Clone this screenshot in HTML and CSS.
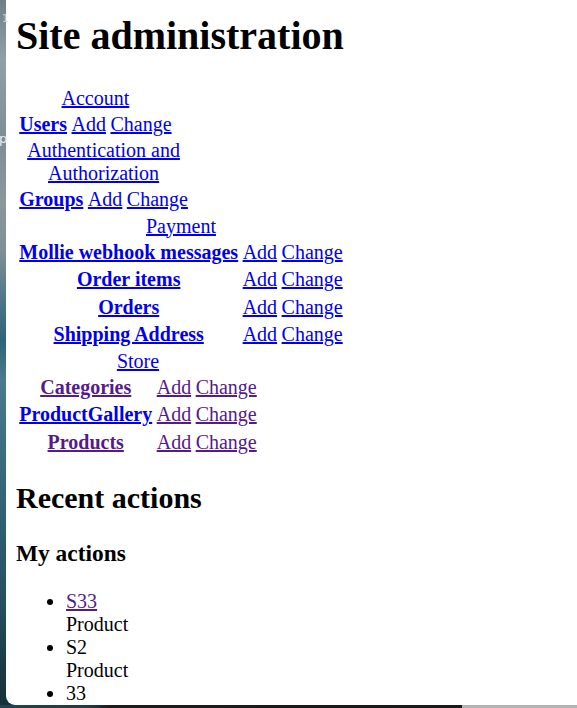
FILE: index.html
```html
<!DOCTYPE html>
<html lang="en">
<head>
<meta charset="utf-8">
<title>Site administration</title>
<link rel="stylesheet" href="styles.css">
</head>
<body class="desktop">
<span class="desk-label desk-label-1">1</span>
<span class="desk-label desk-label-p">p</span>
<div class="window">
  <div class="page">
    <h1 class="title">Site administration</h1>
    <div class="content-main">
      <div class="module">
        <table class="app-table">
          <caption class="app-caption"><a class="link" href="#">Account</a></caption>
          <tr><th class="model-name"><a class="link" href="#">Users</a></th><td class="model-action"><a class="link" href="#">Add</a></td><td class="model-action"><a class="link" href="#">Change</a></td></tr>
        </table>
      </div>
      <div class="module">
        <table class="app-table">
          <caption class="app-caption"><a class="link" href="#">Authentication and Authorization</a></caption>
          <tr><th class="model-name"><a class="link" href="#">Groups</a></th><td class="model-action"><a class="link" href="#">Add</a></td><td class="model-action"><a class="link" href="#">Change</a></td></tr>
        </table>
      </div>
      <div class="module">
        <table class="app-table">
          <caption class="app-caption"><a class="link" href="#">Payment</a></caption>
          <tr><th class="model-name"><a class="link" href="#">Mollie webhook messages</a></th><td class="model-action"><a class="link" href="#">Add</a></td><td class="model-action"><a class="link" href="#">Change</a></td></tr>
          <tr><th class="model-name"><a class="link" href="#">Order items</a></th><td class="model-action"><a class="link" href="#">Add</a></td><td class="model-action"><a class="link" href="#">Change</a></td></tr>
          <tr><th class="model-name"><a class="link" href="#">Orders</a></th><td class="model-action"><a class="link" href="#">Add</a></td><td class="model-action"><a class="link" href="#">Change</a></td></tr>
          <tr><th class="model-name"><a class="link" href="#">Shipping Address</a></th><td class="model-action"><a class="link" href="#">Add</a></td><td class="model-action"><a class="link" href="#">Change</a></td></tr>
        </table>
      </div>
      <div class="module">
        <table class="app-table">
          <caption class="app-caption"><a class="link" href="#">Store</a></caption>
          <tr><th class="model-name"><a class="link visited" href="#">Categories</a></th><td class="model-action"><a class="link visited" href="#">Add</a></td><td class="model-action"><a class="link visited" href="#">Change</a></td></tr>
          <tr><th class="model-name"><a class="link" href="#">ProductGallery</a></th><td class="model-action"><a class="link visited" href="#">Add</a></td><td class="model-action"><a class="link visited" href="#">Change</a></td></tr>
          <tr><th class="model-name"><a class="link visited" href="#">Products</a></th><td class="model-action"><a class="link visited" href="#">Add</a></td><td class="model-action"><a class="link visited" href="#">Change</a></td></tr>
        </table>
      </div>
    </div>
    <div class="content-related">
      <h2 class="section-title">Recent actions</h2>
      <h3 class="sub-title">My actions</h3>
      <ul class="action-list">
        <li class="action-item"><a class="link visited" href="#">S33</a><br><span class="action-type">Product</span></li>
        <li class="action-item">S2<br><span class="action-type">Product</span></li>
        <li class="action-item">33</li>
      </ul>
    </div>
  </div>
</div>
<div class="taskbar-edge"></div>
</body>
</html>
```

FILE: styles.css
```css
html {
  margin: 0;
  padding: 0;
}

.desktop {
  margin: 0;
  padding: 0;
  width: 577px;
  height: 708px;
  overflow: hidden;
  position: relative;
  background: linear-gradient(to bottom,
    #6f7f86 0px,
    #8fa0a6 60px,
    #7d8e94 140px,
    #8a989c 200px,
    #7f9095 250px,
    #4f7687 300px,
    #2e6479 340px,
    #4c7a8c 380px,
    #3f7183 430px,
    #2f6073 520px,
    #27505f 600px,
    #1d3c47 660px,
    #173039 708px);
  font-family: "Liberation Serif", "Times New Roman", serif;
  font-size: 20px;
  color: #000;
}

.desk-label {
  position: absolute;
  left: -1px;
  font-family: "DejaVu Sans", sans-serif;
  font-size: 13px;
  color: #e8ecee;
  line-height: 1;
}

.desk-label-1 {
  top: 14px;
  left: 2px;
  font-size: 10px;
  color: #c9d0d3;
}

.desk-label-p {
  top: 132px;
}

.window {
  margin-left: 6px;
  height: 705px;
  background: #fff;
  border-bottom-left-radius: 9px;
  overflow: hidden;
}

.taskbar-edge {
  height: 3px;
  background: linear-gradient(to right,
    #1f4550 0px,
    #203b44 90px,
    #1c1c1c 110px,
    #1a1a1a 462px,
    #b4b4b4 462px,
    #b4b4b4 577px);
}

.page {
  padding: 0 10px;
}

.title {
  font-size: 40px;
  font-weight: bold;
  margin: 12px 0 27.5px;
}

.module {
  margin: 0;
}

.app-table {
  border-collapse: separate;
  border-spacing: 2.5px;
}

.app-caption {
  text-align: center;
}

.model-name {
  font-weight: bold;
  text-align: center;
  padding: 1.25px;
}

.model-action {
  padding: 1.25px;
}

.link {
  color: #0000ee;
  text-decoration: underline;
}

.link.visited {
  color: #551a8b;
}

.section-title {
  font-size: 30px;
  font-weight: bold;
  margin: 24.4px 0;
}

.sub-title {
  font-size: 23.4px;
  font-weight: bold;
  margin: 23.4px 0;
}

.action-list {
  margin: 20px 0;
  padding-left: 50px;
  list-style: disc;
}
```
